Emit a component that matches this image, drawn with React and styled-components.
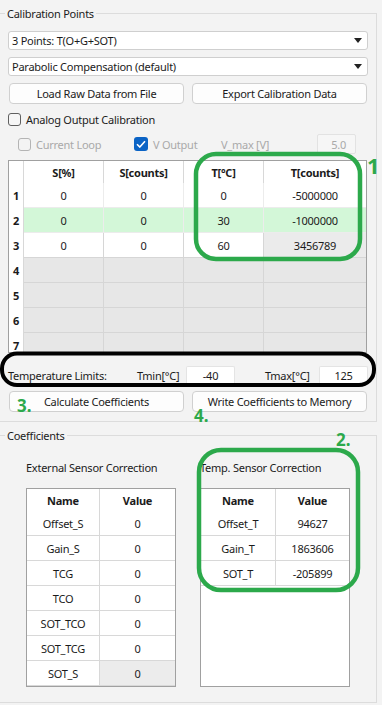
import React from 'react';
import styled, { createGlobalStyle } from 'styled-components';

const FONT = '"Noto Sans", "Liberation Sans", sans-serif';

const Global = createGlobalStyle`
  html, body { margin: 0; padding: 0; background: #f3f3f3; }
  body { font-family: ${FONT}; font-size: 11px; letter-spacing: -0.25px; color: #1b1b1b; }
  * { box-sizing: border-box; }
`;

const Page = styled.div`
  position: relative;
  width: 382px;
  height: 705px;
  overflow: hidden;
  padding-top: 6px;
  background: #f3f3f3;
`;

const Group = styled.fieldset`
  margin: ${(p) => p.$top}px 0 0 -1px;
  width: 378px;
  height: ${(p) => p.$h}px;
  border: 1px solid #dcdcdc;
  padding: 0;
  min-width: 0;
`;

const Legend = styled.legend`
  margin-left: 5px;
  padding: 0 2px;
  line-height: 15px;
  font-size: 11px;
  color: #1b1b1b;
`;

const Body = styled.div`
  padding: ${(p) => p.$pad};
  display: flex;
  flex-direction: column;
`;

const Combo = styled.div`
  height: 19px;
  margin-top: ${(p) => p.$mt || 0}px;
  background: #fff;
  border: 1px solid #cfcfcf;
  border-radius: 3px;
  display: flex;
  align-items: center;
  justify-content: space-between;
  padding: 0 5px 0 3px;
  line-height: 17px;
`;

const Arrow = () => (
  <svg width="8" height="5" viewBox="0 0 8 5">
    <path d="M0 0 H8 L4 5 Z" fill="#222" />
  </svg>
);

const ButtonRow = styled.div`
  display: grid;
  grid-template-columns: 175px 175px;
  column-gap: 8px;
  margin-top: ${(p) => p.$mt}px;
  padding-left: 1px;
`;

const Button = styled.div`
  height: 21px;
  background: #fdfdfd;
  border: 1px solid #d0d0d0;
  border-radius: 4px;
  display: flex;
  align-items: center;
  justify-content: center;
  color: #1b1b1b;
`;

const CheckRow = styled.div`
  display: flex;
  align-items: center;
  height: ${(p) => p.$h}px;
  margin-top: ${(p) => p.$mt}px;
  padding-left: ${(p) => p.$pl || 0}px;
`;

const Box = styled.span`
  width: 13px;
  height: 13px;
  border-radius: 3px;
  border: 1px solid ${(p) => (p.$dim ? '#b4b4b4' : '#5f5f5f')};
  background: ${(p) => (p.$dim ? '#f3f3f3' : '#f6f6f6')};
  margin-right: 5px;
  flex: none;
`;

const CheckedBox = styled.span`
  width: 14px;
  height: 14px;
  border-radius: 3px;
  background: #0a63c5;
  margin-right: 5px;
  display: flex;
  align-items: center;
  justify-content: center;
  flex: none;
`;

const Label = styled.span`
  color: ${(p) => (p.$dim ? '#a9a9a9' : '#1b1b1b')};
  margin-left: ${(p) => p.$ml || 0}px;
  width: ${(p) => (p.$w ? `${p.$w}px` : 'auto')};
  flex: none;
  white-space: nowrap;
`;

const SmallInput = styled.div`
  width: ${(p) => p.$w}px;
  height: ${(p) => p.$h}px;
  margin-left: ${(p) => (p.$auto ? 'auto' : '0')};
  background: ${(p) => (p.$dim ? '#f6f6f6' : '#fff')};
  border: 1px solid ${(p) => (p.$dim ? '#e2e2e2' : '#e4e4e4')};
  border-bottom-color: ${(p) => (p.$dim ? '#e2e2e2' : '#8f8f8f')};
  border-radius: 2px;
  display: flex;
  align-items: center;
  justify-content: ${(p) => p.$align || 'center'};
  padding-right: ${(p) => p.$pr || 0}px;
  color: ${(p) => (p.$dim ? '#a9a9a9' : '#1b1b1b')};
  flex: none;
`;

const Grid = styled.div`
  margin-top: 6px;
  width: 359px;
  height: 193px;
  overflow: hidden;
  background: #fff;
  border: 1px solid #a0a0a0;
  display: grid;
  grid-template-columns: 15px 80px 80px 80px 1fr;
  grid-auto-rows: 25px;
  grid-template-rows: 22px;
  align-content: start;
`;

const HeadCell = styled.div`
  font-weight: 700;
  display: flex;
  align-items: center;
  justify-content: center;
  border-right: ${(p) => (p.$last ? 'none' : '1px solid #d8d8d8')};
  background: #fff;
`;

const RowHead = styled.div`
  font-weight: 700;
  display: flex;
  align-items: center;
  justify-content: center;
  border-right: 1px solid #d8d8d8;
  background: #fff;
`;

const Cell = styled.div`
  display: flex;
  align-items: center;
  justify-content: center;
  background: ${(p) => p.$bg};
  border-right: ${(p) => (p.$last ? 'none' : `1px solid ${p.$line}`)};
  border-bottom: 1px solid ${(p) => p.$line};
`;

const TempRow = styled.div`
  display: flex;
  align-items: center;
  height: 19px;
  margin-top: 13px;
`;

const Columns = styled.div`
  display: grid;
  grid-template-columns: 150px 150px;
  column-gap: 24px;
  padding-left: 26px;
`;

const Col = styled.div`
  display: flex;
  flex-direction: column;
`;

const Caption = styled.div`
  line-height: 15px;
  height: 15px;
  white-space: nowrap;
`;

const CoefTable = styled.div`
  margin-top: 13px;
  height: 199px;
  background: #fff;
  border: 1px solid #a0a0a0;
  display: grid;
  grid-template-columns: ${(p) => p.$cols};
  grid-template-rows: 22px;
  grid-auto-rows: 25px;
  align-content: start;
`;

const CoefHead = styled.div`
  font-weight: 700;
  display: flex;
  align-items: center;
  justify-content: center;
  border-right: ${(p) => (p.$last ? 'none' : '1px solid #d8d8d8')};
`;

const CoefCell = styled.div`
  display: flex;
  align-items: center;
  justify-content: center;
  background: ${(p) => (p.$gray ? '#ececec' : '#fff')};
  border-right: ${(p) => (p.$last ? 'none' : '1px solid #d8d8d8')};
  border-bottom: 1px solid #d8d8d8;
`;

const Overlay = styled.svg`
  position: absolute;
  left: 0;
  top: 0;
  pointer-events: none;
  letter-spacing: 0;
`;

const calRows = [
  ['0', '0', '0', '-5000000'],
  ['0', '0', '30', '-1000000'],
  ['0', '0', '60', '3456789'],
  null,
  null,
  null,
  null,
];

const extRows = [
  ['Offset_S', '0'],
  ['Gain_S', '0'],
  ['TCG', '0'],
  ['TCO', '0'],
  ['SOT_TCO', '0'],
  ['SOT_TCG', '0'],
  ['SOT_S', '0'],
];

const tempRows = [
  ['Offset_T', '94627'],
  ['Gain_T', '1863606'],
  ['SOT_T', '-205899'],
];

function cellBg(r, c) {
  if (r >= 3) return '#e7e7e7';
  if (r === 1) return '#d3f7d8';
  if (r === 2 && c === 3) return '#ebebeb';
  return '#fff';
}

export default function App() {
  return (
    <Page>
      <Global />
      <Group $top={0} $h={416}>
        <Legend>Calibration Points</Legend>
        <Body $pad="10px 8px 0 8px">
          <Combo>
            <span>3 Points: T(O+G+SOT)</span>
            <Arrow />
          </Combo>
          <Combo $mt={7}>
            <span>Parabolic Compensation (default)</span>
            <Arrow />
          </Combo>
          <ButtonRow $mt={7}>
            <Button>Load Raw Data from File</Button>
            <Button>Export Calibration Data</Button>
          </ButtonRow>
          <CheckRow $h={14} $mt={8}>
            <Box />
            <Label>Analog Output Calibration</Label>
          </CheckRow>
          <CheckRow $h={20} $mt={8} $pl={10}>
            <Box $dim />
            <Label $dim $w={98}>Current Loop</Label>
            <CheckedBox>
              <svg width="10" height="8" viewBox="0 0 10 8">
                <path d="M1 4.2 L3.8 7 L9 1.2" fill="none" stroke="#fff" strokeWidth="1.6" />
              </svg>
            </CheckedBox>
            <Label $dim $w={68}>V Output</Label>
            <Label $dim>V_max [V]</Label>
            <SmallInput $auto $dim $w={39} $h={20} $align="flex-end" $pr={9} style={{ marginRight: 12 }}>5.0</SmallInput>
          </CheckRow>
          <Grid>
            <HeadCell />
            <HeadCell>S[%]</HeadCell>
            <HeadCell>S[counts]</HeadCell>
            <HeadCell>T[°C]</HeadCell>
            <HeadCell $last>T[counts]</HeadCell>
            {calRows.map((row, r) => (
              <React.Fragment key={r}>
                <RowHead>{r + 1}</RowHead>
                {[0, 1, 2, 3].map((c) => (
                  <Cell
                    key={c}
                    $bg={cellBg(r, c)}
                    $line={r >= 2 ? '#d6d6d6' : '#ececec'}
                    $last={c === 3}
                  >
                    {row ? row[c] : ''}
                  </Cell>
                ))}
              </React.Fragment>
            ))}
          </Grid>
          <TempRow>
            <Label $w={129}>Temperature Limits:</Label>
            <Label $w={49}>Tmin[°C]</Label>
            <SmallInput $w={49} $h={19}>-40</SmallInput>
            <Label $ml={30} $w={54}>Tmax[°C]</Label>
            <SmallInput $w={49} $h={19}>125</SmallInput>
          </TempRow>
          <ButtonRow $mt={6}>
            <Button>Calculate Coefficients</Button>
            <Button>Write Coefficients to Memory</Button>
          </ButtonRow>
        </Body>
      </Group>
      <Group $top={6} $h={275}>
        <Legend>Coefficients</Legend>
        <Body $pad="17px 0 0 0">
          <Columns>
            <Col>
              <Caption>External Sensor Correction</Caption>
              <CoefTable $cols="73px 1fr">
                <CoefHead>Name</CoefHead>
                <CoefHead $last>Value</CoefHead>
                {extRows.map((r, i) => (
                  <React.Fragment key={i}>
                    <CoefCell>{r[0]}</CoefCell>
                    <CoefCell $last $gray={i === 6}>{r[1]}</CoefCell>
                  </React.Fragment>
                ))}
              </CoefTable>
            </Col>
            <Col>
              <Caption>Temp. Sensor Correction</Caption>
              <CoefTable $cols="75px 1fr">
                <CoefHead>Name</CoefHead>
                <CoefHead $last>Value</CoefHead>
                {tempRows.map((r, i) => (
                  <React.Fragment key={i}>
                    <CoefCell>{r[0]}</CoefCell>
                    <CoefCell $last>{r[1]}</CoefCell>
                  </React.Fragment>
                ))}
              </CoefTable>
            </Col>
          </Columns>
        </Body>
      </Group>
      <Overlay width="382" height="705" viewBox="0 0 382 705">
        <rect x="196" y="154" width="164" height="105" rx="20" fill="none" stroke="#2ca94b" strokeWidth="4.5" />
        <rect x="199" y="450" width="159" height="140" rx="22" fill="none" stroke="#2ca94b" strokeWidth="4.5" />
        <rect x="2" y="353.5" width="372" height="31.5" rx="15" fill="none" stroke="#000" strokeWidth="4" />
        <g fill="#2ca94b" fontFamily={FONT} fontWeight="700">
          <text x="367" y="174" fontSize="22">1</text>
          <text x="336" y="446" fontSize="17">2.</text>
          <text x="17" y="412" fontSize="17">3.</text>
          <text x="194" y="422" fontSize="17">4.</text>
        </g>
      </Overlay>
    </Page>
  );
}
